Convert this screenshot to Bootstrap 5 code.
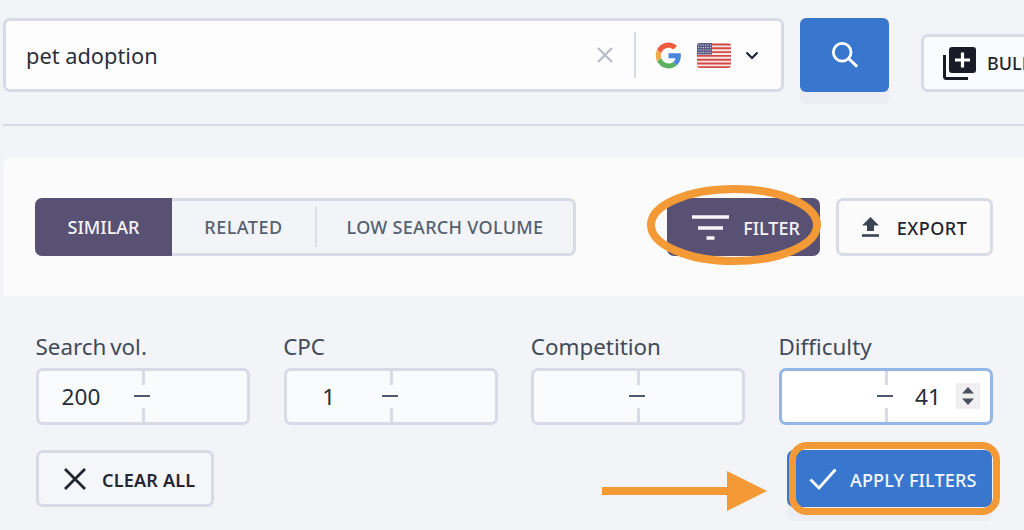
<!DOCTYPE html>
<html lang="en">
<head>
<meta charset="utf-8">
<title>Keyword filters</title>
<link rel="stylesheet" href="https://cdn.jsdelivr.net/npm/bootstrap@5.3.0/dist/css/bootstrap.min.css">
<style>
html,body{height:530px;overflow:hidden}
body{background:#f2f4f8;font-family:"Noto Sans",sans-serif;color:#1f2430;position:relative}
.shell{padding:18px 0 0 3px;width:1024px}
.topbar{height:74px;gap:16px;width:1200px}
.searchbox{width:781px;height:74px;border:3px solid #d8dae5;border-radius:7px;background:#fdfdfe;padding:0 0 0 20px;font-size:21.8px;color:#2a303c}
.termtext{padding-top:3px}
.clearx{margin-right:21px}
.vline{width:2px;height:46px;background:#d8dae5;margin-right:19px}
.flag{margin:0 14px 0 15px}
.chev{margin-right:22px}
.searchbtn{width:89px;height:74px;background:#3877cd;border:0;border-radius:6px;box-shadow:0 12px 0 #ecedf3;padding:0}
.bulkbtn{margin-left:16px;margin-top:16px;height:58px;width:200px;background:#fafbfc;border:3px solid #d8dae5;border-radius:7px;font-size:18px;font-weight:500;color:#1f2430;padding-left:19px;gap:11px;white-space:nowrap}
.rule{height:2px;background:#d8dae5;margin:32px 0 32px}
.panelhead{background:#fbfbfc;height:138px;padding:40px 32px;border-radius:7px 0 0 0}
.tabset{width:541px;height:58px;border:3px solid #d8dae5;border-radius:7px;background:#f2f4f8;font-size:18px;font-weight:500;color:#566170}
.tabon{width:137px;height:58px;margin:-3px 0 -3px -3px;background:#585173;color:#f5f5f8;border-radius:7px 0 0 7px}
.tabone{width:143px;letter-spacing:.5px}
.tabtwo{flex:1;border-left:2px solid #dcdee7;height:40px;letter-spacing:.3px}
.actbtn{height:58px;border-radius:7px;font-size:18px;font-weight:500}
.filterbtn{width:153px;margin-left:91px;background:#585173;color:#f5f5f8;gap:14px;border:0;padding-left:5px}
.exportbtn{width:157px;margin-left:16px;background:#fbfbfc;border:3px solid #d8dae5;color:#1f2430;gap:18px;letter-spacing:.5px}
.labeltext{padding-top:2px}
.filters{padding:36px 31px 0 33px}
.fgrid{display:grid;grid-template-columns:repeat(4,214px);column-gap:33.67px}
.flabel{font-size:22.4px;line-height:30px;color:#414a58;margin:0 0 6px -.5px;word-spacing:-2px}
.rangebox{height:57px;border:3px solid #d8dae5;border-radius:7px;background:#fafbfc;font-size:22.6px;color:#272d38}
.rangeon{border-color:#92b7e9;background:#fff}
.lefthalf{width:103px;padding-right:19px}
.seam{width:3px;position:relative}
.seam i{width:3px;height:14px;background:#d8dae5;display:block}
.seam b{position:absolute;left:-8px;top:24px;width:16px;height:2px;background:#4e5870}
.righthalf{flex:1;gap:15px;padding-right:10px}
.spin{width:24px;height:26px;background:#f0f0f1}
.actions{margin-top:25px}
.clearbtn{width:178px;height:57px;border:3px solid #d8dae5;border-radius:7px;background:#f5f6f9;font-size:18px;font-weight:600;color:#232834;gap:15px;padding-left:24px;letter-spacing:.2px}
.applybtn{width:205px;height:57px;background:#3877cd;border:0;border-radius:7px;color:#f5f8fd;font-size:18px;font-weight:500;margin-left:auto;margin-right:1px;gap:13px;padding-left:22px;box-shadow:0 14px 0 #eceef3;letter-spacing:.15px}
.lowtext{padding-top:3px}
.ringsvg{position:absolute;left:640px;top:180px}
.boxmark{position:absolute;left:789px;top:442px;width:211px;height:73px;border:7px solid #f39a36;border-radius:18px}
.arrowsvg{position:absolute;left:600px;top:468px}
</style>
</head>
<body>
<div class="shell">
  <div class="d-flex topbar">
    <div class="searchbox d-flex align-items-center flex-shrink-0">
      <span class="termtext flex-grow-1">pet adoption</span>
      <svg class="clearx" width="16" height="16" viewBox="0 0 16 16"><path d="M1 1l14 14M15 1L1 15" stroke="#b9bcc4" stroke-width="2.2" fill="none"/></svg>
      <span class="vline"></span>
      <svg width="27" height="27" viewBox="0 0 48 48"><path fill="#4a86e0" d="M46 24.5c0-1.6-.1-3.200-.4-4.700H24v9h12.400c-.5 2.900-2.200 5.300-4.600 7l7.200 5.600C43.300 37.400 46 31.500 46 24.500z"/><path fill="#5db161" d="M24 47c6.200 0 11.400-2 15-5.600l-7.200-5.600c-2 1.400-4.600 2.200-7.800 2.200-6 0-11-4-12.800-9.500l-7.500 5.800C7.500 41.700 15.200 47 24 47z"/><path fill="#f4a94a" d="M11.200 28.500c-.9-2.800-.9-6.200 0-9L3.700 13.700c-3.100 6.200-3.100 14.400 0 20.600z"/><path fill="#ee5a3c" d="M24 10c3.300 0 6.300 1.100 8.600 3.400l6.400-6.400C35.100 3.300 30 1 24 1 15.200 1 7.500 6.300 3.700 13.700l7.500 5.800C13 14 18 10 24 10z"/></svg>
      <svg class="flag" width="34" height="25" viewBox="0 0 34 25"><defs><clipPath id="fc"><rect width="34" height="25" rx="3"/></clipPath></defs><g clip-path="url(#fc)"><rect width="34" height="25" fill="#f7e6e2"/><path d="M0 1.500h34M0 5.300h34M0 9.100h34M0 12.900h34M0 16.700h34M0 20.500h34M0 24.300h34" stroke="#d24c4a" stroke-width="1.900"/><rect width="15" height="11.500" fill="#5b5c86"/><path d="M1 2h13M1 4.500h13M1 7h13M1 9.500h13" stroke="#c7c8d8" stroke-width="1.200" stroke-dasharray="1.200 1.200"/></g></svg>
      <svg class="chev" width="14" height="9" viewBox="0 0 14 9"><path d="M1.500 1.500L7 7l5.500-5.500" stroke="#20242f" stroke-width="2.200" fill="none"/></svg>
    </div>
    <button class="searchbtn d-flex align-items-center justify-content-center flex-shrink-0" aria-label="Search">
      <svg width="28" height="28" viewBox="0 0 30 30"><circle cx="12" cy="12" r="9.500" stroke="#fff" stroke-width="3" fill="none"/><path d="M18.500 18.500L28 27.500" stroke="#fff" stroke-width="3.200" fill="none"/></svg>
    </button>
    <div class="bulkbtn d-flex align-items-center flex-shrink-0">
      <svg class="flex-shrink-0" width="33" height="33" viewBox="0 0 33 33"><path d="M1.500 8v21.500a2 2 0 0 0 2 2H25" stroke="#191c26" stroke-width="3" fill="none"/><rect x="6" y="0" width="27" height="26" rx="3" fill="#191c26"/><path d="M19.500 5.500v15M12 13h15" stroke="#fff" stroke-width="3.200"/></svg>
      <span>BULK</span>
    </div>
  </div>
  <div class="rule"></div>
  <div class="panelhead d-flex align-items-center">
    <div class="tabset d-flex align-items-center flex-shrink-0">
      <div class="tabon d-flex align-items-center justify-content-center flex-shrink-0">SIMILAR</div>
      <div class="tabone text-center flex-shrink-0">RELATED</div>
      <div class="tabtwo d-flex align-items-center justify-content-center">LOW SEARCH VOLUME</div>
    </div>
    <div class="actbtn filterbtn d-flex align-items-center justify-content-center flex-shrink-0">
      <svg width="37" height="25" viewBox="0 0 37 25"><path d="M0 2h37M6 13h25M14.500 23h8" stroke="#f5f5f8" stroke-width="3.600"/></svg>
      <span class="labeltext">FILTER</span>
    </div>
    <div class="actbtn exportbtn d-flex align-items-center justify-content-center flex-shrink-0">
      <svg width="17" height="20" viewBox="0 0 17 20"><path d="M8.500 0L17 8.500h-5V14H5V8.500H0z" fill="#3a4454"/><path d="M0 18.500h17" stroke="#3a4454" stroke-width="2.600"/></svg>
      <span class="labeltext">EXPORT</span>
    </div>
  </div>
  <div class="filters">
    <div class="fgrid">
      <div>
        <div class="flabel">Search vol.</div>
        <div class="rangebox d-flex align-items-center">
          <div class="lefthalf text-center flex-shrink-0">200</div>
          <div class="seam d-flex flex-column justify-content-between align-self-stretch flex-shrink-0"><i></i><b></b><i></i></div>
          <div class="righthalf"></div>
        </div>
      </div>
      <div>
        <div class="flabel">CPC</div>
        <div class="rangebox d-flex align-items-center">
          <div class="lefthalf text-center flex-shrink-0">1</div>
          <div class="seam d-flex flex-column justify-content-between align-self-stretch flex-shrink-0"><i></i><b></b><i></i></div>
          <div class="righthalf"></div>
        </div>
      </div>
      <div>
        <div class="flabel">Competition</div>
        <div class="rangebox d-flex align-items-center">
          <div class="lefthalf text-center flex-shrink-0"></div>
          <div class="seam d-flex flex-column justify-content-between align-self-stretch flex-shrink-0"><i></i><b></b><i></i></div>
          <div class="righthalf"></div>
        </div>
      </div>
      <div>
        <div class="flabel">Difficulty</div>
        <div class="rangebox rangeon d-flex align-items-center">
          <div class="lefthalf text-center flex-shrink-0"></div>
          <div class="seam d-flex flex-column justify-content-between align-self-stretch flex-shrink-0"><i></i><b></b><i></i></div>
          <div class="righthalf d-flex align-items-center justify-content-end">
            <span>41</span>
            <span class="spin d-flex align-items-center justify-content-center"><svg width="12" height="18" viewBox="0 0 12 18"><path d="M6 0l6 6.500H0zM6 18l-6-6.500h12z" fill="#4a5260"/></svg></span>
          </div>
        </div>
      </div>
    </div>
    <div class="actions d-flex">
      <div class="clearbtn d-flex align-items-center">
        <svg width="24" height="24" viewBox="0 0 24 24"><path d="M2 2l20 20M22 2L2 22" stroke="#20242f" stroke-width="2.800" fill="none"/></svg>
        <span class="lowtext">CLEAR ALL</span>
      </div>
      <div class="applybtn d-flex align-items-center">
        <svg width="28" height="22" viewBox="0 0 28 22"><path d="M1.500 11.500L10 20 26.500 1.500" stroke="#fff" stroke-width="2.800" fill="none"/></svg>
        <span class="lowtext">APPLY FILTERS</span>
      </div>
    </div>
  </div>
</div>
<svg class="ringsvg" width="190" height="90" viewBox="0 0 190 90"><ellipse cx="94" cy="45" rx="83" ry="36" fill="none" stroke="#f39a36" stroke-width="8"/></svg>
<div class="boxmark"></div>
<svg class="arrowsvg" width="170" height="46" viewBox="0 0 170 46"><path d="M2 19h125V3l40 20-40 20V27H2z" fill="#f39a36"/></svg>
</body>
</html>
